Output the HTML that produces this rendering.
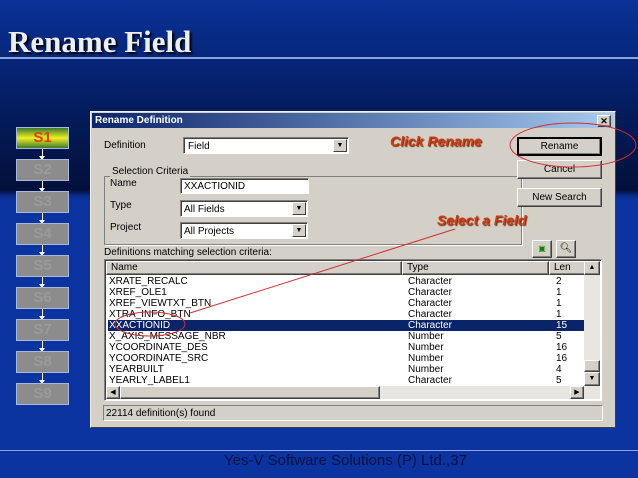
<!DOCTYPE html>
<html><head><meta charset="utf-8"><style>
*{margin:0;padding:0;box-sizing:border-box}
body{width:638px;height:478px;overflow:hidden;position:relative;font-family:"Liberation Sans",sans-serif;
background:linear-gradient(180deg,#0a3296 0px,#06267a 60px,#041c5e 110px,#03103a 190px,#0a2a8c 196px,#0b34a0 200px,#0b34a0 478px)}
.a{position:absolute}
.t{font-size:10px;color:#000;white-space:nowrap}
.sunk{background:#fff;border:1px solid;border-color:#808080 #fff #fff #808080;box-shadow:inset 1px 1px 0 #404040}
.btn{background:#d4d0c8;border:1px solid;border-color:#fff #404040 #404040 #fff;box-shadow:inset -1px -1px 0 #808080;font-size:10px;text-align:center}
.dd{position:absolute;right:1px;top:1px;bottom:1px;width:14px;background:#d4d0c8;border:1px solid;border-color:#fff #404040 #404040 #fff;font-size:7px;text-align:center;line-height:12px}
.step{position:absolute;left:16px;width:53px;height:22px;background:#8c8c8c;border:1px solid #a8b8e0;color:#9a9a9a;font-weight:bold;font-size:15px;text-align:center;line-height:20px}
.arr{position:absolute;left:42px;width:1px;height:9px;background:#fff}
.arr:after{content:"";position:absolute;left:-3px;bottom:-2px;border:3px solid transparent;border-top:4px solid #fff;border-bottom:0}
.row{position:absolute;left:3px;right:17px;height:11px;font-size:10px;line-height:11px}
.row span{position:absolute}
.red{color:#d23a10;font-weight:bold;font-style:italic;font-size:14px;text-shadow:1px 1px 1px #6a2a10}
</style></head><body>
<div class="a" style="left:8px;top:24px;font-family:'Liberation Serif',serif;font-weight:bold;font-size:31px;color:#eeeef6;text-shadow:2px 2px 2px #000">Rename Field</div>
<div class="a" style="left:0;top:57px;width:638px;height:2px;background:#8aa4e0"></div>

<div class="step" style="top:127px;background:linear-gradient(#3a7a30,#f0f020 50%,#3a7a30);color:#e04010">S1</div>
<div class="arr" style="top:149px"></div>
<div class="step" style="top:159px">S2</div><div class="arr" style="top:181px"></div>
<div class="step" style="top:191px">S3</div><div class="arr" style="top:213px"></div>
<div class="step" style="top:223px">S4</div><div class="arr" style="top:245px"></div>
<div class="step" style="top:255px">S5</div><div class="arr" style="top:277px"></div>
<div class="step" style="top:287px">S6</div><div class="arr" style="top:309px"></div>
<div class="step" style="top:319px">S7</div><div class="arr" style="top:341px"></div>
<div class="step" style="top:351px">S8</div><div class="arr" style="top:373px"></div>
<div class="step" style="top:383px">S9</div>

<div class="a" style="left:90px;top:111px;width:526px;height:317px;background:#d4d0c8;border:1px solid;border-color:#f0f0f0 #404040 #404040 #f0f0f0">
 <div class="a" style="left:1px;top:1px;right:1px;height:15px;background:linear-gradient(90deg,#0a246a,#a6caf0);color:#fff;font-weight:bold;font-size:10px;line-height:15px;padding-left:3px">Rename Definition</div>
 <div class="btn a" style="right:4px;top:3px;width:14px;height:12px;font-size:9px;line-height:10px;font-weight:bold">✕</div>
</div>
<div class="a t" style="left:104px;top:140px">Definition</div>
<div class="a sunk t" style="left:183px;top:137px;width:166px;height:17px;padding:3px 4px">Field<div class="dd">▼</div></div>
<div class="a" style="left:104px;top:176px;width:418px;height:69px;border:1px solid #808080;box-shadow:1px 1px 0 #fff"></div>
<div class="a t" style="left:110px;top:166px;background:#d4d0c8;padding:0 2px">Selection Criteria</div>
<div class="a t" style="left:110px;top:178px">Name</div>
<div class="a sunk t" style="left:180px;top:178px;width:129px;height:16px;padding:2px 3px">XXACTIONID</div>
<div class="a t" style="left:110px;top:200px">Type</div>
<div class="a sunk t" style="left:180px;top:200px;width:128px;height:17px;padding:3px 3px">All Fields<div class="dd">▼</div></div>
<div class="a t" style="left:110px;top:222px">Project</div>
<div class="a sunk t" style="left:180px;top:222px;width:128px;height:17px;padding:3px 3px">All Projects<div class="dd">▼</div></div>
<div class="a t" style="left:104px;top:247px">Definitions matching selection criteria:</div>

<div class="btn a" style="left:517px;top:137px;width:85px;height:19px;line-height:16px;border:2px solid #000">Rename</div>
<div class="btn a" style="left:517px;top:160px;width:85px;height:19px;line-height:17px">Cancel</div>
<div class="btn a" style="left:517px;top:188px;width:85px;height:19px;line-height:17px">New Search</div>
<div class="btn a" style="left:532px;top:240px;width:20px;height:18px;font-size:8px;line-height:16px;color:#080">▣</div>
<div class="btn a" style="left:556px;top:240px;width:20px;height:18px;font-size:10px;line-height:16px">🔍︎</div>

<div class="a sunk" style="left:104px;top:259px;width:498px;height:142px">
 <div class="a" style="left:1px;top:1px;right:17px;height:14px;background:#d4d0c8;font-size:10px;line-height:13px">
  <div class="a btn" style="left:0;top:0;width:296px;height:14px;text-align:left;padding-left:4px;line-height:12px">Name</div>
  <div class="a btn" style="left:296px;top:0;width:147px;height:14px;text-align:left;padding-left:4px;line-height:12px">Type</div>
  <div class="a btn" style="left:443px;top:0;width:40px;height:14px;text-align:left;padding-left:4px;line-height:12px">Len</div>
 </div>
 <div class="row" style="top:16px"><span style="left:1px">XRATE_RECALC</span><span style="left:300px">Character</span><span style="left:448px">2</span></div>
 <div class="row" style="top:27px"><span style="left:1px">XREF_OLE1</span><span style="left:300px">Character</span><span style="left:448px">1</span></div>
 <div class="row" style="top:38px"><span style="left:1px">XREF_VIEWTXT_BTN</span><span style="left:300px">Character</span><span style="left:448px">1</span></div>
 <div class="row" style="top:49px"><span style="left:1px">XTRA_INFO_BTN</span><span style="left:300px">Character</span><span style="left:448px">1</span></div>
 <div class="row" style="top:60px;background:#0a246a;color:#fff"><span style="left:1px">XXACTIONID</span><span style="left:300px">Character</span><span style="left:448px">15</span></div>
 <div class="row" style="top:71px"><span style="left:1px">X_AXIS_MESSAGE_NBR</span><span style="left:300px">Number</span><span style="left:448px">5</span></div>
 <div class="row" style="top:82px"><span style="left:1px">YCOORDINATE_DES</span><span style="left:300px">Number</span><span style="left:448px">16</span></div>
 <div class="row" style="top:93px"><span style="left:1px">YCOORDINATE_SRC</span><span style="left:300px">Number</span><span style="left:448px">16</span></div>
 <div class="row" style="top:104px"><span style="left:1px">YEARBUILT</span><span style="left:300px">Number</span><span style="left:448px">4</span></div>
 <div class="row" style="top:115px"><span style="left:1px">YEARLY_LABEL1</span><span style="left:300px">Character</span><span style="left:448px">5</span></div>
 <div class="a" style="right:1px;top:1px;width:16px;bottom:14px;background:#e8e6e0">
  <div class="btn a" style="left:0;top:0;width:16px;height:14px;font-size:7px;line-height:12px">▲</div>
  <div class="btn a" style="left:0;bottom:14px;width:16px;height:12px"></div>
  <div class="btn a" style="left:0;bottom:0;width:16px;height:14px;font-size:7px;line-height:12px">▼</div>
 </div>
 <div class="a" style="left:1px;bottom:1px;right:1px;height:13px;background:#e8e6e0">
  <div class="btn a" style="left:0;top:0;width:14px;height:13px;font-size:7px;line-height:11px">◀</div>
  <div class="btn a" style="left:14px;top:0;width:260px;height:13px"></div>
  <div class="btn a" style="right:16px;top:0;width:14px;height:13px;font-size:7px;line-height:11px">▶</div>
 </div>
</div>
<div class="a t" style="left:103px;top:405px;width:500px;height:16px;border:1px solid;border-color:#808080 #fff #fff #808080;padding:2px 2px">22114 definition(s) found</div>

<div class="a red" style="left:390px;top:133px">Click Rename</div>
<div class="a red" style="left:437px;top:212px">Select a Field</div>
<svg class="a" style="left:0;top:0" width="638" height="478">
 <ellipse cx="573" cy="145" rx="63" ry="22" fill="none" stroke="#d03030" stroke-width="1"/>
 <ellipse cx="150" cy="324" rx="35" ry="12" fill="none" stroke="#d03030" stroke-width="1"/>
 <line x1="455" y1="229" x2="190" y2="313" stroke="#d03030" stroke-width="1"/>
</svg>

<div class="a" style="left:0;top:450px;width:638px;height:1px;background:#8aa4e0"></div>
<div class="a" style="left:224px;top:452px;font-size:15px;color:#081240">Yes-V Software Solutions (P) Ltd.,37</div>
</body></html>
